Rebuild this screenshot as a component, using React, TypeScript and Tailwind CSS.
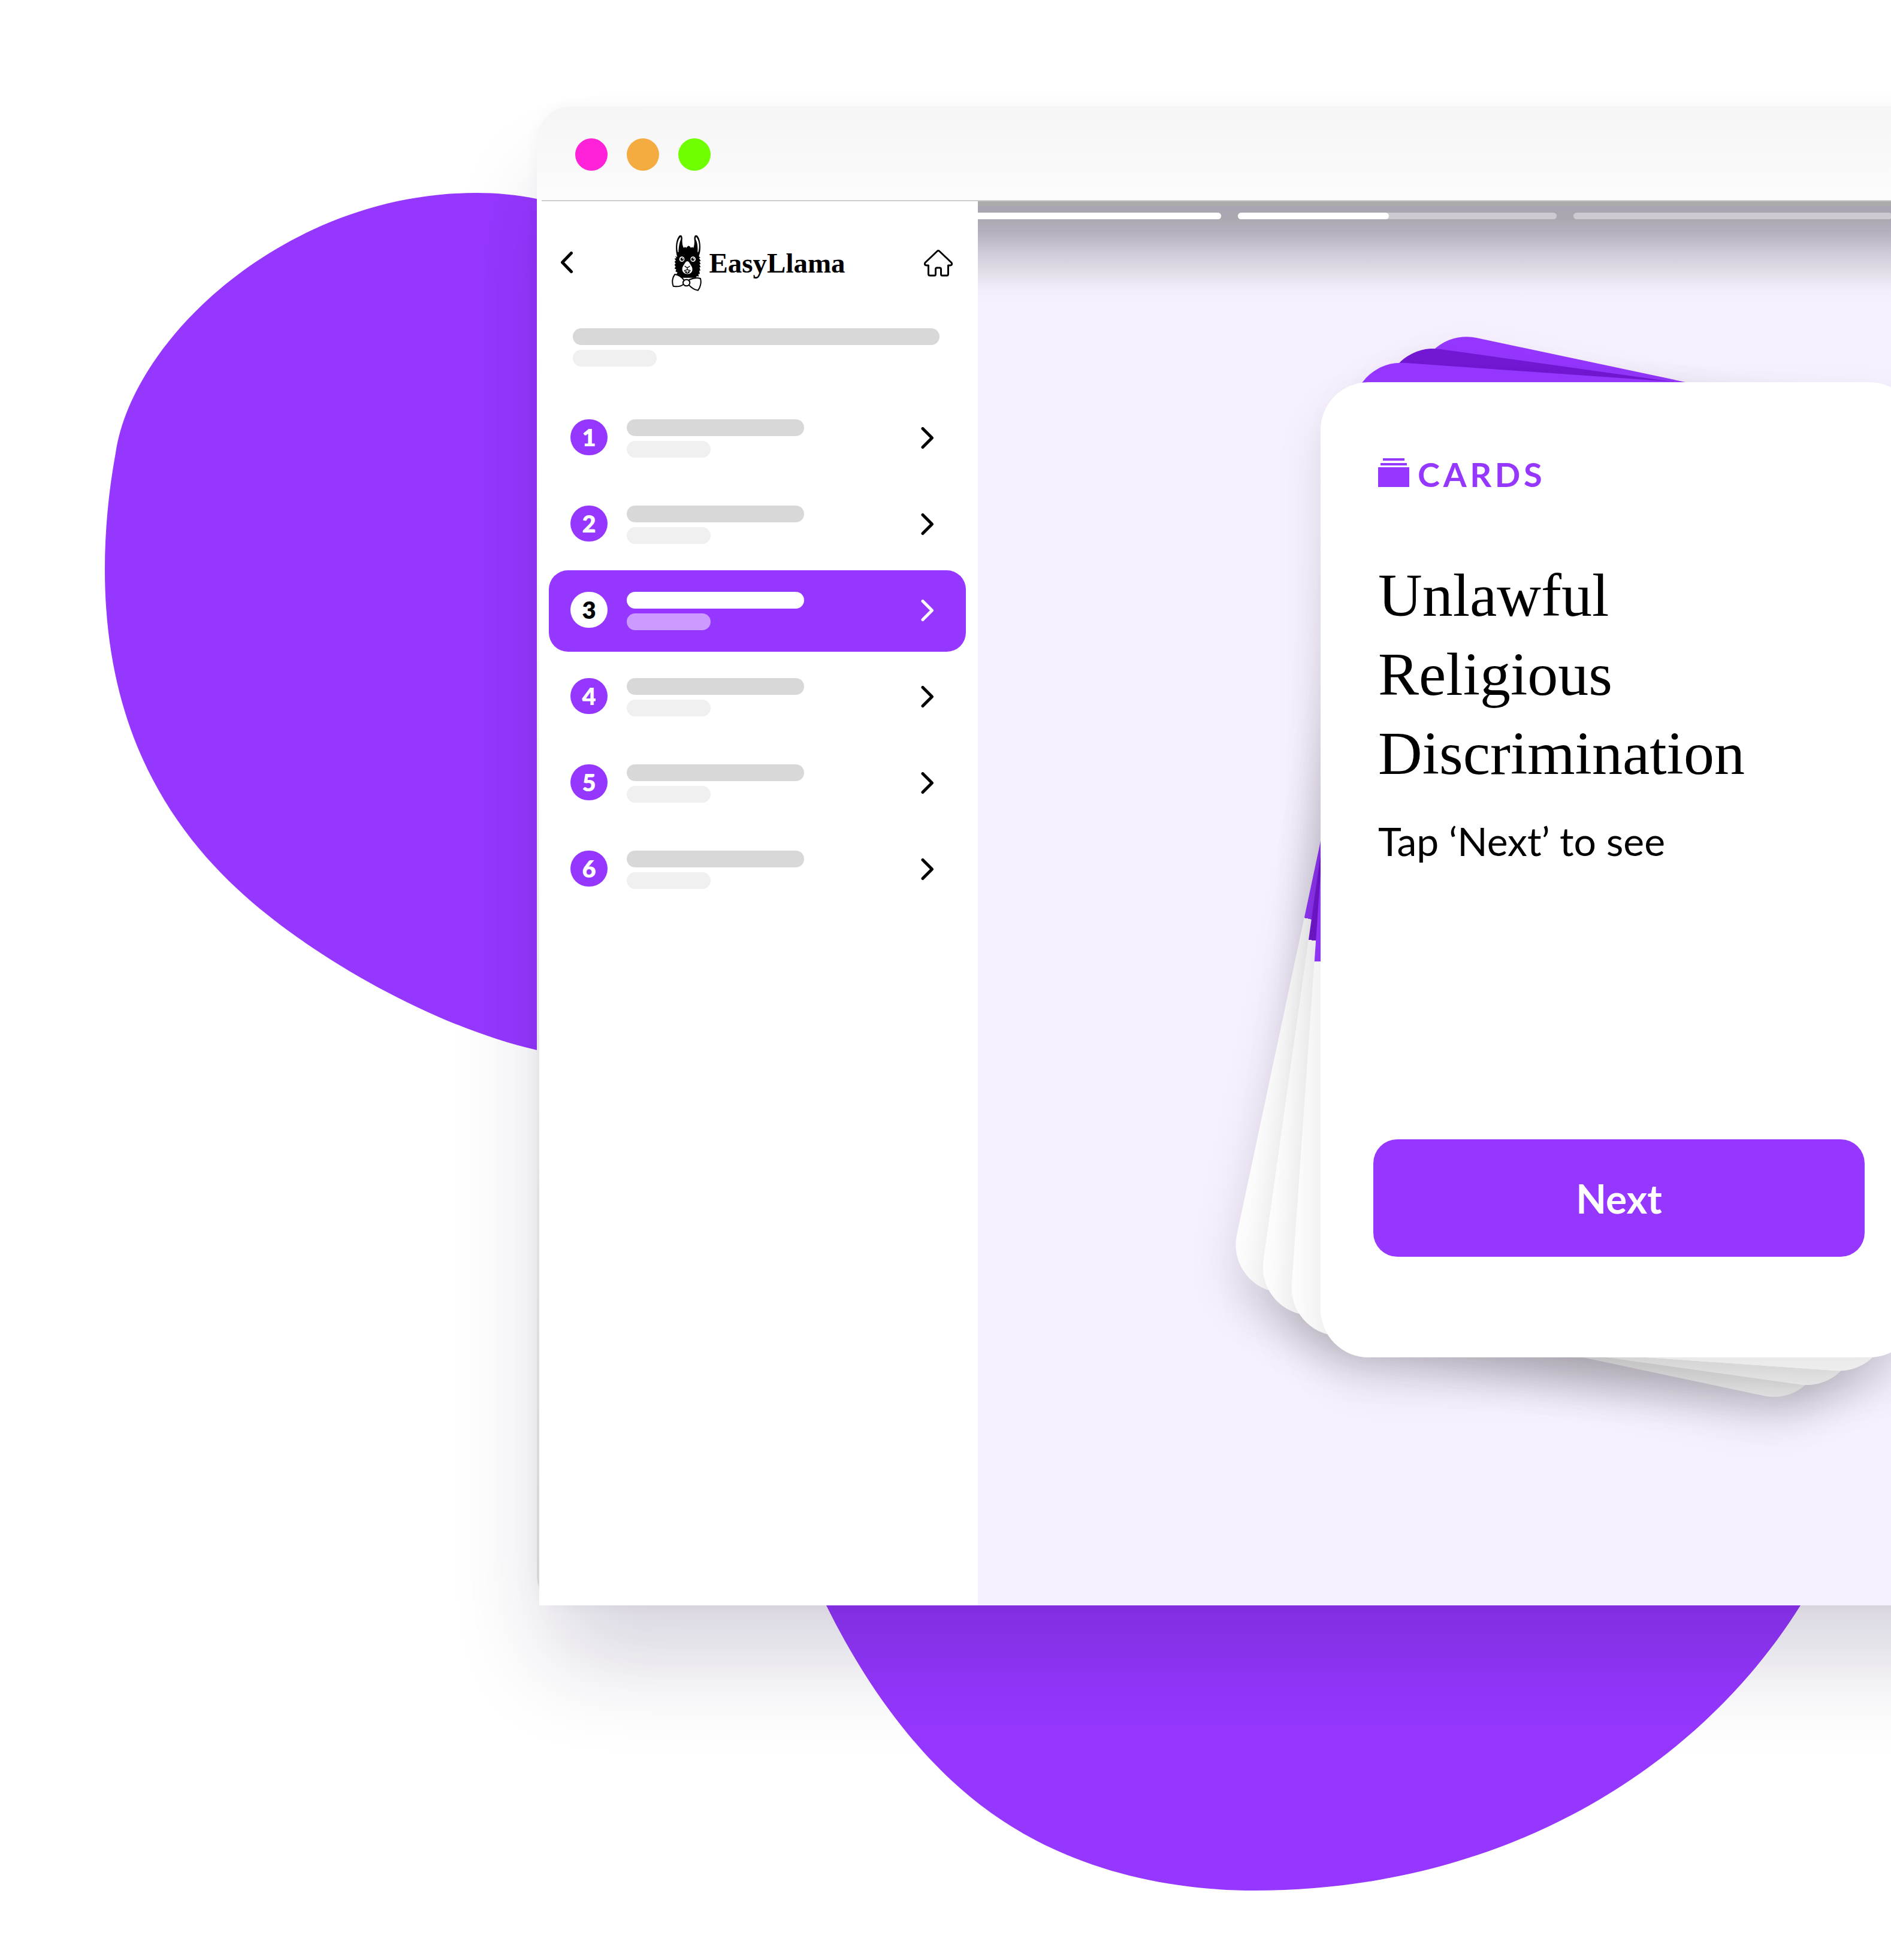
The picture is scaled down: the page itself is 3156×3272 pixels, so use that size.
import React from "react"
import clsx from "clsx"

const lessons = [1, 2, 3, 4, 5, 6]
const activeLesson = 3

// back to front, the open card sits on top of these
const deck = [
  { id: "rear", className: "rotate-12 bg-[linear-gradient(#9637ff_1007px,#ffffff_1007px)]" },
  { id: "middle", className: "rotate-[8deg] bg-[linear-gradient(#7318d4_1007px,#ffffff_1007px)]" },
  { id: "front", className: "rotate-[4deg] bg-[linear-gradient(#9637ff_1007px,#ffffff_1007px)]" },
]

const progress = [
  { id: "intro", fill: "w-full" },
  { id: "current", fill: "w-[252px]" },
  { id: "upcoming", fill: "w-0" },
]

function Blobs() {
  return (
    <>
      <svg className="absolute left-0 top-0 h-[1800px] w-[1000px]" viewBox="0 0 1000 1800" fill="#9637ff" aria-hidden="true">
        <path d="M940 340L896 332C862 325 829 322 795 322C480 322 222 562 193 756C182 816 175 882 175 951C175 1264 325 1433 455 1534C575 1628 750 1720 896 1753L940 1762Z" />
      </svg>
      <svg className="absolute left-[1360px] top-[2600px] h-[560px] w-[1700px]" viewBox="1360 2600 1700 560" fill="#9637ff" aria-hidden="true">
        <path d="M1340 2600L1379 2680C1466 2856 1570 2972 1674 3040C1792 3118 1940 3156 2094 3156C2500 3156 2830 2960 3005 2680L3050 2600Z" />
      </svg>
    </>
  )
}

function Llama() {
  return (
    <svg className="h-[94px] w-[50px]" viewBox="60 65 150 282" aria-hidden="true">
      <path d="M88 176C76 140 80 84 100 68C110 64 115 72 113 90C112 108 115 122 120 130L127 126L133 130L138 124L145 120L152 124L156 130L163 126L168 131C173 120 175 105 173 90C171 72 176 64 187 68C206 84 208 140 198 166L196 172L204 180L197 182L206 196L199 197L205 212L199 212L205 228L199 228L204 244L198 244L201 262L194 260L195 274L186 272L180 280L100 280L92 268L84 262L89 254L79 248L83 238L74 234L80 224L74 216L80 208L74 200L81 194L74 184L84 182L78 172Z" />
      <path d="M91 152C84 126 89 92 103 77C107 76 107 82 105 90C99 104 95 128 94 152Z" fill="#fff" />
      <path d="M193 152C202 126 197 92 184 77C179 76 179 82 181 90C189 104 191 128 190 152Z" fill="#fff" />
      <g fill="#fff">
        <circle cx="111" cy="187" r="13" />
        <circle cx="167" cy="187" r="13" />
        <path d="M138 197C128 199 124 212 117 222C108 238 114 256 130 260C134 262 144 262 148 260C164 256 168 238 159 222C152 212 149 199 138 197Z" />
      </g>
      <circle cx="112" cy="187" r="8" />
      <circle cx="166" cy="187" r="8" />
      <circle cx="115" cy="184" r="3" fill="#fff" />
      <circle cx="169" cy="184" r="3" fill="#fff" />
      <path d="M126 222C130 226 134 228 138 230C142 228 147 226 150 222M138 228V238M124 244C130 242 135 242 138 238C142 242 148 242 153 244M126 244C128 254 132 257 138 257C144 257 149 254 151 244M134 248V256M143 248V256" fill="none" stroke="#000" strokeWidth="4" strokeLinecap="round" />
      <g fill="#fff" stroke="#000" strokeWidth="6" strokeLinejoin="round">
        <path d="M76 263C62 280 61 304 68 322C86 326 104 324 118 314L122 292C108 274 94 265 76 263Z" />
        <path d="M148 290C166 282 186 277 204 284C210 304 203 328 192 343C172 340 158 330 146 316Z" />
        <ellipse cx="134" cy="305" rx="17" ry="16" />
      </g>
    </svg>
  )
}

function ChevronRight() {
  return (
    <svg className="h-[38px] w-6" viewBox="0 0 24 38" fill="none" stroke="currentColor" strokeWidth="5" strokeLinecap="round" strokeLinejoin="round" aria-hidden="true">
      <path d="M4 2.500L19.500 18L4 33.500" />
    </svg>
  )
}

function Sidebar() {
  return (
    <aside className="w-[732px] shrink-0 bg-white pt-14">
      <header className="grid grid-cols-[1fr_auto_1fr] items-center px-9">
        <button type="button" aria-label="Back" className="justify-self-start">
          <svg className="h-[38px] w-8" viewBox="0 0 32 38" fill="none" stroke="#000" strokeWidth="5" strokeLinecap="round" strokeLinejoin="round" aria-hidden="true">
            <path d="M17.500 2.500L2.500 18L17.500 33.500" />
          </svg>
        </button>
        <div className="flex items-center gap-3">
          <Llama />
          <span className="font-['Liberation_Serif',serif] text-[47px] font-bold leading-[56px] text-black">EasyLlama</span>
        </div>
        <a href="#home" aria-label="Home" className="justify-self-end">
          <svg className="h-[46px] w-[60px]" viewBox="0 0 60 46" fill="none" stroke="#000" strokeWidth="3" strokeLinejoin="round" aria-hidden="true">
            <path d="M28 3.500Q30 1.500 32 3.500L52 22.500Q54 26.500 50 27H46.500V41Q46.500 44 44 44H36.500Q34.500 44 34.500 41.500V33.500Q34.500 31 32 31H28Q25.500 31 25.500 33.500V41.500Q25.500 44 23.500 44H16Q13.500 44 13.500 41V27H10Q6 26.500 8 22.500Z" />
          </svg>
        </a>
      </header>

      <div className="mt-[62px] flex flex-col gap-2 pl-14 pr-16">
        <div className="h-7 rounded-full bg-[#d8d8d8]" />
        <div className="h-7 w-[140px] rounded-full bg-[#f0f0f0]" />
      </div>

      <nav className="mt-[52px] pl-4 pr-5">
        <ol className="flex flex-col gap-2">
          {lessons.map((lesson) => {
            const isActive = lesson === activeLesson
            return (
              <li key={lesson}>
                <button
                  type="button"
                  className={clsx(
                    "flex w-full items-center gap-8 rounded-[32px] py-9 pl-9 pr-[52px]",
                    isActive ? "bg-[#9637ff] text-white" : "text-black"
                  )}
                >
                  <span
                    className={clsx(
                      "flex h-[60px] w-[62px] items-center justify-center self-start rounded-full font-['Lato',sans-serif] text-[40px] font-extrabold leading-none",
                      isActive ? "bg-white text-black" : "bg-[#9637ff] text-white"
                    )}
                  >
                    {lesson}
                  </span>
                  <span className="flex flex-1 flex-col gap-2">
                    <span className={clsx("h-7 w-[296px] rounded-full", isActive ? "bg-white" : "bg-[#d8d8d8]")} />
                    <span className={clsx("h-7 w-[140px] rounded-full", isActive ? "bg-[#cb9bff]" : "bg-[#f0f0f0]")} />
                  </span>
                  <ChevronRight />
                </button>
              </li>
            )
          })}
        </ol>
      </nav>
    </aside>
  )
}

function CardStack() {
  return (
    <div className="relative w-[996px] shrink-0">
      {deck.map((card) => (
        <div
          key={card.id}
          className={clsx(
            "absolute inset-0 -translate-y-[5px] translate-x-[2px] rounded-[80px] shadow-[0_40px_80px_rgba(0,0,0,0.1)]",
            card.className
          )}
        />
      ))}
      <article className="relative flex min-h-[1628px] flex-col rounded-[80px] bg-white px-[88px] pb-[168px] pt-[122px] shadow-[0_40px_80px_rgba(0,0,0,0.1)]">
        <div className="flex items-baseline gap-[14px] px-2 text-[#9637ff]">
          <svg className="h-12 w-[52px]" viewBox="0 0 52 48" fill="currentColor" aria-hidden="true">
            <path d="M8 0H44V4H8ZM4 8H48V12H4ZM0 15H52V48H0Z" />
          </svg>
          <span className="font-['Lato',sans-serif] text-[56px] font-bold leading-[64px] tracking-widest">CARDS</span>
        </div>
        <div className="mt-[104px] px-2 text-black">
          <h1 className="font-['Liberation_Serif',serif] text-[102px] leading-[132px]">
            Unlawful
            <br />
            Religious
            <br />
            Discrimination
          </h1>
          <p className="mt-8 font-['Lato',sans-serif] text-[66px] leading-[96px]">Tap ‘Next’ to see</p>
        </div>
        <button type="button" className="mt-auto h-[196px] rounded-[40px] bg-[#9637ff] font-['Lato',sans-serif] text-[66px] font-bold text-white">
          Next
        </button>
      </article>
    </div>
  )
}

function Lesson() {
  return (
    <main className="min-w-0 flex-1 bg-[#f7f1ff] pb-[414px]">
      {/* soft shade under the toolbar that carries the story progress */}
      <div className="h-[168px] overflow-hidden border-t-8 border-[#ababab] bg-[linear-gradient(#a9a5b0,#aca8b2_14%,#b6b0bc_27%,#cfcad6_48%,#e3dde8_69%,#f1ecf9_85%,#f7f1ff)] pt-[11px]">
        <div className="-ml-[126px] flex gap-7">
          {progress.map((step) => (
            <div key={step.id} className="h-[11px] w-[532px] shrink-0 rounded-full bg-white/40">
              <div className={clsx("h-full rounded-full bg-white", step.fill)} />
            </div>
          ))}
        </div>
      </div>
      <div className="flex pl-[572px] pt-[134px]">
        <CardStack />
      </div>
    </main>
  )
}

export default function App() {
  return (
    <div className="relative min-h-screen overflow-hidden bg-white pb-[592px] pl-[896px] pt-[178px]">
      <Blobs />
      {/* the window runs off the right side of the page */}
      <div className="relative -mr-60 rounded-bl-[48px] rounded-tl-[56px] bg-[linear-gradient(#f5f5f5,#fcfcfc_158px,#ffffff_400px,#d5d5d5)] shadow-[0_110px_160px_-20px_rgba(30,10,70,0.18),0_0_24px_rgba(0,0,0,0.04)]">
        <div className="pl-2">
          <div className="flex h-[158px] items-center gap-8 border-b-2 border-[#cccccc] pl-14 pt-1">
            <span className="size-[54px] rounded-full bg-[#ff22d8]" />
            <span className="size-[54px] rounded-full bg-[#f4ac40]" />
            <span className="size-[54px] rounded-full bg-[#6fff00]" />
          </div>
        </div>
        <div className="flex pl-1">
          <Sidebar />
          <div className="flex min-w-0 flex-1 overflow-hidden">
            <Lesson />
          </div>
        </div>
      </div>
    </div>
  )
}
